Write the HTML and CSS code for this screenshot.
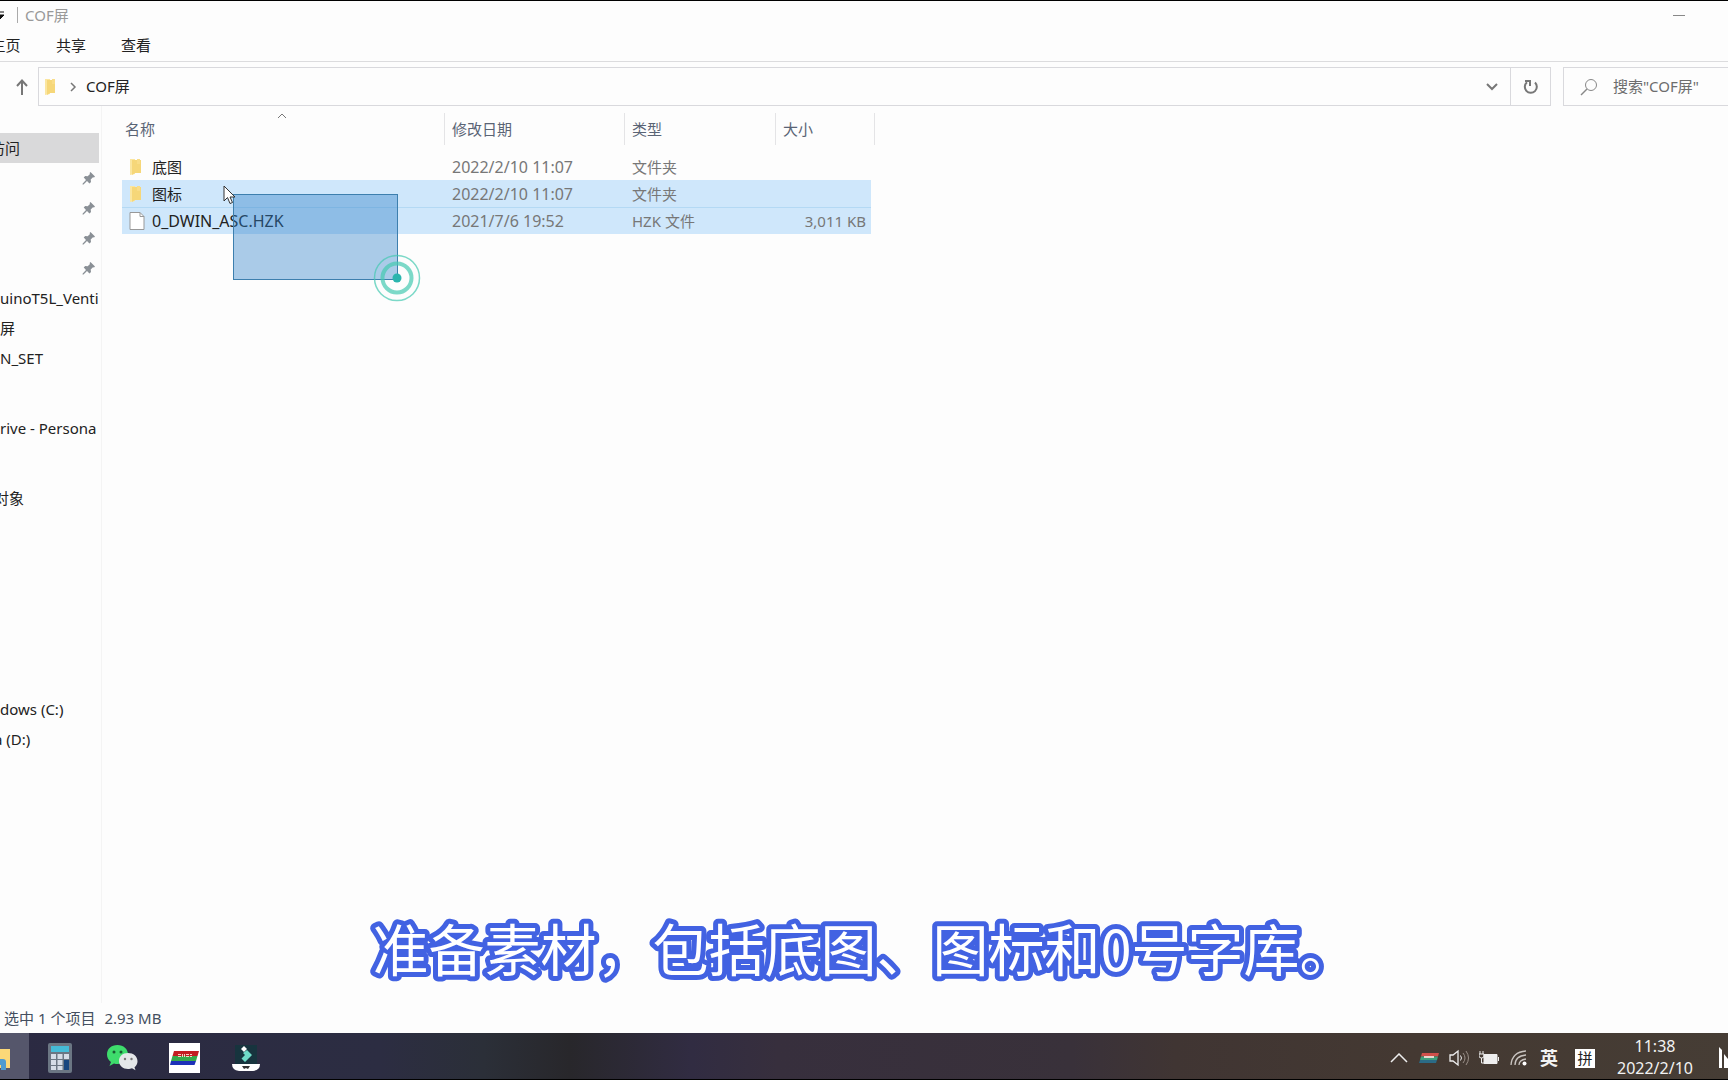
FILE: index.html
```
<!DOCTYPE html>
<html lang="zh-CN">
<head>
  <meta charset="UTF-8" />
  <meta name="viewport" content="width=device-width, initial-scale=1.0"/>
  <title>COF屏</title>
  <link rel="stylesheet" href="styles.css">
</head>
<body>
  <header class="titlebar">
    <svg class="quick" width="5" height="8" viewBox="0 0 5 8"><path d="M0 1h4M0 4h4L0 8z" fill="#111" stroke="#111"/></svg>
    <span class="window-title">COF屏</span>
    <button class="minimize" aria-label="最小化"></button>
  </header>

  <nav class="tabs">
    <button class="cut">主页</button>
    <button>共享</button>
    <button>查看</button>
  </nav>

  <div class="toolbar">
    <button class="up" aria-label="向上">
      <svg width="14" height="18" viewBox="0 0 14 18"><path d="M7 17V3M2 8l5-5.500 5 5.500" fill="none" stroke="#777" stroke-width="2"/></svg>
    </button>
    <div class="address">
      <svg width="12" height="18" viewBox="0 0 12 18"><path d="M1 1h5v15l-5 1z" fill="#fbe6a0"/><path d="M3 2h8v13H6l-3 2z" fill="#f6d779"/><path d="M8 1h3v5H8z" fill="#f9dd88"/></svg>
      <svg class="crumb" width="7" height="10" viewBox="0 0 7 10"><path d="M1 1l4 4-4 4" fill="none" stroke="#777" stroke-width="1.500"/></svg>
      <a href="#">COF屏</a>
      <button class="history" aria-label="历史记录">
        <svg width="12" height="8" viewBox="0 0 12 8"><path d="M1 1l5 5 5-5" fill="none" stroke="#777" stroke-width="2"/></svg>
      </button>
      <button class="refresh" aria-label="刷新">
        <svg width="16" height="16" viewBox="0 0 16 16"><path d="M12 3.500a6 6 0 1 1-8-.3" fill="none" stroke="#777" stroke-width="2"/><path d="M2 2h5v5" fill="none" stroke="#777" stroke-width="2"/></svg>
      </button>
    </div>
    <label class="search">
      <svg width="18" height="18" viewBox="0 0 18 18"><circle cx="11" cy="7" r="5.500" fill="none" stroke="#888"/><path d="M7 11l-6 6" stroke="#888" stroke-width="1.500"/></svg>
      <input type="text" placeholder='搜索"COF屏"' aria-label="搜索">
    </label>
  </div>

  <main class="content">
    <aside class="sidebar">
      <ul>
        <li class="current cut">访问</li>
        <li class="pinned"><svg width="14" height="14" viewBox="0 0 14 14"><use href="#pin"/></svg></li>
        <li class="pinned"><svg width="14" height="14" viewBox="0 0 14 14"><use href="#pin"/></svg></li>
        <li class="pinned"><svg width="14" height="14" viewBox="0 0 14 14"><use href="#pin"/></svg></li>
        <li class="pinned"><svg width="14" height="14" viewBox="0 0 14 14"><use href="#pin"/></svg></li>
        <li>uinoT5L_Venti</li>
        <li>屏</li>
        <li>N_SET</li>
      </ul>
      <ul>
        <li>rive - Persona</li>
      </ul>
      <ul>
        <li class="nested">对象</li>
        <li class="drive">dows (C:)</li>
        <li class="nested">a (D:)</li>
      </ul>
    </aside>

    <section class="files">
      <table>
        <colgroup>
          <col class="col-name"><col class="col-date"><col class="col-type"><col class="col-size"><col class="col-edge">
        </colgroup>
        <thead>
          <tr>
            <th class="sorted">名称
              <svg width="10" height="6" viewBox="0 0 10 6"><path d="M1 5l4-4 4 4" fill="none" stroke="#777"/></svg>
            </th>
            <th>修改日期</th>
            <th>类型</th>
            <th colspan="2">大小</th>
          </tr>
        </thead>
        <tbody>
          <tr>
            <td class="name"><svg width="16" height="18" viewBox="0 0 16 18"><use href="#folder"/></svg>底图</td>
            <td class="date">2022/2/10 11:07</td>
            <td>文件夹</td>
            <td></td>
          </tr>
          <tr class="selected">
            <td class="name"><svg width="16" height="18" viewBox="0 0 16 18"><use href="#folder"/></svg>图标</td>
            <td class="date">2022/2/10 11:07</td>
            <td>文件夹</td>
            <td></td>
          </tr>
          <tr class="selected">
            <td class="name latin"><svg width="16" height="18" viewBox="0 0 16 18"><path d="M1 .5h10l4 4v13H1z" fill="#fff" stroke="#999"/><path d="M11 .5v4h4" fill="none" stroke="#999"/></svg>0_DWIN_ASC.HZK</td>
            <td class="date">2021/7/6 19:52</td>
            <td>HZK 文件</td>
            <td class="size">3,011 KB</td>
          </tr>
        </tbody>
      </table>
    </section>
  </main>

  <footer class="status">
    <span>选中 1 个项目</span>
    <span>2.93 MB</span>
  </footer>

  <div class="taskbar">
    <div class="apps">
      <button class="active" aria-label="文件资源管理器">
        <svg width="32" height="32" viewBox="0 0 32 32"><path d="M2 6h10l3 3h-13z" fill="#e8b33f"/><path d="M2 7h26v19H2z" fill="#fbd878"/><path d="M5 28V20q0-3 3-3h13q3 0 3 3v8h-5v-5h-9v5z" fill="#4e9bd0"/></svg>
      </button>
      <button aria-label="计算器">
        <svg width="24" height="30" viewBox="0 0 24 30"><rect width="24" height="30" rx="2" fill="#6b7683"/><path d="M3 3h18v6H3z" fill="#46bcd8"/><path d="M3 11h5v5H3zM9.500 11h5v5h-5zM16 11h5v5h-5zM3 17h5v5H3zM9.500 17h5v5h-5zM3 23h5v4H3zM9.500 23h5v4h-5z" fill="#d5dce6"/><path d="M16 17h5v10h-5z" fill="#19477f"/></svg>
      </button>
      <button aria-label="微信">
        <svg width="32" height="28" viewBox="0 0 32 28"><path d="M11.500 1C5 1 1 5 1 10.500c0 3 1.500 5.500 4 7.500l-1.500 4 4.500-2.500c7 2 14-2 14-9C22 5 17.500 1 11.500 1z" fill="#3edc6c"/><circle cx="8" cy="8" r="1.500" fill="#195b32"/><circle cx="15" cy="8" r="1.500" fill="#195b32"/><path d="M22 9c-5.500 0-9 3.500-9 8s4 8 9 8c1.500 0 3-.3 4-.8l3.500 2-1-3c2-1.500 3-3.700 3-6C31.500 12.500 27.500 9 22 9z" fill="#e4e6e8"/><circle cx="19" cy="15" r="1.200" fill="#777"/><circle cx="25.500" cy="15" r="1.200" fill="#777"/></svg>
      </button>
      <button aria-label="DGUS">
        <svg width="31" height="30" viewBox="0 0 31 30"><path d="M0 0h31v30H0z" fill="#fff"/><path d="M5 8h25l-1.500 5H3.500z" fill="#c41c22"/><path d="M3.500 13h25L27 18H2z" fill="#36a94a"/><path d="M2 18h25l-1.500 4H1z" fill="#1d30b8"/><path d="M9 11h3v1h-3zM9 13h3v1h-3zM13 11h1v3h-1zM15 11h1v3h-1zM17 11h3v1h-3zM17 13h3v1h-3zM21 11h2v1h-2zM21 13h2v1h-2z" fill="#f2d3c3"/></svg>
      </button>
      <button aria-label="Filmora">
        <svg width="28" height="28" viewBox="0 0 28 28"><path d="M3 1h22v19H3z" fill="#17343e"/><path d="M12 2l3 3-3 3-3-3z" fill="#fff"/><path d="M15 6l5 5-7 7-3.500-3.500 3.500-3.500-2-2z" fill="#6fdcc8"/><path d="M0 20h28q0 6-7 7H7q-7-1-7-7z" fill="#fff"/><path d="M10 22h8l-2 3-2-1-2 1z" fill="#333"/></svg>
      </button>
    </div>

    <div class="tray">
      <button aria-label="显示隐藏的图标"><svg width="18" height="10" viewBox="0 0 18 10"><path d="M1 9l8-8 8 8" fill="none" stroke="#eee" stroke-width="1.500"/></svg></button>
      <button aria-label="DGUS"><svg width="20" height="10" viewBox="0 0 20 10"><path d="M3 0h17l-1 3.500H2z" fill="#d0504a"/><path d="M2 3.500h17l-1 3.500H1z" fill="#3f9f7c"/><path d="M1 7h17l-1 3H0z" fill="#2b6b86"/><path d="M5 3h10v2H5z" fill="#e7d5cc"/></svg></button>
      <button aria-label="音量"><svg width="20" height="18" viewBox="0 0 20 18"><path d="M1 6h3l5-4v14l-5-4H1z" fill="none" stroke="#eee" stroke-width="1.300"/><path d="M11.500 6.500q2 2.500 0 5" fill="none" stroke="#eee"/><path d="M14 4q4 5 0 10M17 2q5 7 0 14" fill="none" stroke="#998f88"/></svg></button>
      <button aria-label="电池"><svg width="20" height="16" viewBox="0 0 20 16"><path d="M5 4.500h13v9H5z" fill="#eee" stroke="#eee"/><path d="M19 7h1v4h-1z" fill="#eee"/><path d="M1 1v3M4 1v3M0 4h5v2q0 2-2.500 2T0 6zM2.500 8v5H5" fill="none" stroke="#eee"/></svg></button>
      <button aria-label="网络"><svg width="18" height="18" viewBox="0 0 18 18"><g fill="none" stroke="#c9c4c0" stroke-width="1.300"><path d="M1 16Q2 3 16 2"/><path d="M5 16Q5 7 16 6"/><path d="M9 16q0-5 7-6"/></g><circle cx="14.500" cy="14.500" r="2" fill="#fff"/></svg></button>
      <button class="lang">英</button>
      <button class="ime"><span>拼</span></button>
      <button class="clock">11:38<br>2022/2/10</button>
      <button class="notify" aria-label="通知"><svg width="9" height="22" viewBox="0 0 9 22"><path d="M0 0l3 3v18H0z" fill="#fff"/><path d="M5 7l4 5v9H5z" fill="#fff"/></svg></button>
    </div>
  </div>

  <!-- drag selection, pointer and click marker -->
  <div class="marquee"></div>
  <svg class="pointer" width="14" height="20" viewBox="0 0 14 20"><path d="M1 1v15l3.500-3.500L7 18.500l2.500-1-2.500-5.500h5z" fill="#fff" stroke="#333"/></svg>
  <svg class="click" width="48" height="48" viewBox="0 0 48 48"><g fill="none" stroke="#45c9b0"><circle cx="24" cy="24" r="22.500" stroke-width="1.500" opacity=".7"/><circle cx="24" cy="24" r="14.500" stroke-width="4" opacity=".7"/></g><circle cx="24" cy="24" r="4.500" fill="#2bb5ae"/></svg>

  <svg class="subtitle">
    <text x="50%" y="56" text-anchor="middle">准备素材，包括底图、图标和0号字库。</text>
  </svg>

  <svg class="symbols" width="0" height="0">
    <symbol id="pin" viewBox="0 0 14 14"><path d="M8.500 1l4.500 4.500-1 1-1-.3-2.300 2.300.3 2.500-1.500 1.500L5 10 1.500 13.500l-1 .0.200-1L4 9 1.700 6.500 3.200 5l2.500.3L8 3l-.4-1z" fill="#8a9096"/></symbol>
    <symbol id="folder" viewBox="0 0 16 18"><path d="M1 1h5v15l-5 1z" fill="#fbe6a0"/><path d="M3 2h9v13H6l-3 2z" fill="#f6d779"/><path d="M8 1h3v5H8z" fill="#f9dd88"/></symbol>
  </svg>
</body>
</html>
```
FILE: styles.css
```
* {
  box-sizing: border-box;
}
body {
  margin: 0;
  height: 100vh;
  display: flex;
  flex-direction: column;
  position: relative;
  overflow: hidden;
  background: #fdfdfd;
  border-top: 1px solid #000;
  border-bottom: 1px solid #000;
  font-family: "Noto Sans", "Noto Sans CJK SC", sans-serif;
  font-size: 15px;
  line-height: 20px;
  color: #222;
}
button {
  background: none;
  border: none;
  padding: 0;
  font: inherit;
  color: inherit;
}
svg {
  flex: none;
  display: block;
}
.cut {
  text-indent: -10px;
}

/* title bar and ribbon tabs */
.titlebar {
  height: 28px;
  display: flex;
  align-items: center;
  gap: 12px;
}
.window-title {
  border-left: 1px solid #aaa;
  padding-left: 7px;
  line-height: 16px;
  color: #999;
}
.minimize {
  width: 12px;
  height: 1px;
  background: #888;
  margin-left: auto;
  margin-right: 43px;
}
.tabs {
  height: 33px;
  display: flex;
  gap: 35px;
  padding-bottom: 1px;
  border-bottom: 1px solid #dcdcde;
}
.tabs .cut {
  width: 21px;
}

/* address row */
.toolbar {
  display: flex;
  padding: 5px 0 0 15px;
}
.up {
  width: 23px;
}
.address {
  flex: 1;
  height: 39px;
  display: flex;
  align-items: center;
  border: 1px solid #d9d9dd;
  padding-left: 5px;
}
.address a {
  padding-bottom: 2px;
  color: #222;
  text-decoration: none;
}
.crumb {
  margin: 0 9px 0 14px;
}
.history {
  margin-left: auto;
  width: 36px;
  display: flex;
  justify-content: center;
}
.refresh {
  width: 40px;
  height: 37px;
  display: flex;
  align-items: center;
  justify-content: center;
  border-left: 1px solid #d9d9dd;
}
.search {
  width: 165px;
  margin-left: 12px;
  display: flex;
  align-items: center;
  gap: 15px;
  padding-left: 16px;
  border: 1px solid #d9d9dd;
  border-right: none;
}
.search input {
  width: 100%;
  min-width: 0;
  border: none;
  padding: 0 0 2px;
  background: none;
  font: inherit;
}
.search input::placeholder {
  color: #6d6d6d;
}

/* navigation pane */
.content {
  flex: 1;
  display: flex;
}
.sidebar {
  width: 102px;
  padding: 27px 2px 0 0;
  border-right: 1px solid #f4f4f4;
}
.sidebar ul {
  list-style: none;
  margin: 0 0 40px;
  padding: 0;
}
.sidebar li {
  height: 30px;
  line-height: 30px;
  white-space: nowrap;
  overflow: hidden;
}
.sidebar .current {
  background: #d9d9da;
}
.sidebar .pinned {
  display: flex;
  align-items: center;
  justify-content: flex-end;
  padding-right: 3px;
}
.sidebar .nested {
  text-indent: -6px;
}
.sidebar .drive {
  margin-top: 181px;
}

/* file list */
.files {
  flex: 1;
  padding: 7px 0 0 20px;
}
table {
  table-layout: fixed;
  width: 753px;
  border-collapse: separate;
  border-spacing: 0;
}
.col-name { width: 323px; }
.col-date { width: 180px; }
.col-type { width: 151px; }
.col-size { width: 95px; }
.col-edge { width: 4px; }
th {
  height: 32px;
  padding: 0 0 0 7px;
  border-right: 1px solid #e4e4e6;
  font-weight: normal;
  text-align: left;
  color: #5a6475;
}
.sorted {
  position: relative;
  padding-left: 3px;
}
.sorted svg {
  position: absolute;
  top: 0;
  left: 48%;
}
tbody::before {
  content: "";
  display: block;
  height: 8px;
}
td {
  height: 27px;
  padding: 0 0 0 7px;
  color: #777;
}
.name {
  display: flex;
  align-items: center;
  gap: 7px;
  color: #222;
}
.date,
.latin {
  font-size: 16px;
}
.size {
  padding: 0 5px 0 0;
  text-align: right;
  white-space: nowrap;
}
.selected td {
  background: #cfe7fb;
}
.selected + .selected td {
  border-top: 1px solid #b4d9f4;
}

/* status bar */
.status {
  height: 30px;
  display: flex;
  align-items: center;
  gap: 9px;
  padding-left: 4px;
  color: #444f60;
}

/* taskbar */
.taskbar {
  height: 46px;
  display: flex;
  justify-content: space-between;
  overflow: hidden;
  background: linear-gradient(90deg, #2b2a42 0%, #2c2d42 22%, #2b2f38 28%, #28272b 33%, #312c42 40%, #372f3d 45%, #39313a 62%, #403533 68%, #443932 82%, #463d35 100%);
  color: #f2f2f2;
}
.apps,
.tray {
  display: flex;
}
.apps {
  margin-left: -33px;
}
.apps button {
  width: 62px;
  padding-top: 4px;
  display: flex;
  align-items: center;
  justify-content: center;
}
.apps .active {
  background: #55566b;
}
.tray button {
  width: 30px;
  padding-top: 4px;
  display: flex;
  align-items: center;
  justify-content: center;
}
.tray .lang {
  font-size: 18px;
  font-weight: bold;
}
.tray .ime {
  width: 42px;
}
.ime span {
  background: #fff;
  color: #222;
  line-height: 19px;
  padding: 0 2px;
}
.tray .clock {
  display: block;
  width: 98px;
  padding-top: 2px;
  font-size: 16px;
  line-height: 22px;
  text-align: center;
}
.tray .notify {
  width: 24px;
  justify-content: flex-end;
}

/* overlays on top of the window */
.marquee {
  position: absolute;
  left: 233px;
  top: 193px;
  width: 165px;
  height: 86px;
  background: rgba(45, 128, 200, 0.4);
  border: 1px solid #3d7fae;
}
.pointer {
  position: absolute;
  left: 223px;
  top: 184px;
}
.click {
  position: absolute;
  left: 373px;
  top: 253px;
}
.subtitle {
  position: absolute;
  left: 0;
  bottom: 88px;
  width: 100%;
  height: 76px;
}
.subtitle text {
  font-family: "Noto Sans CJK SC", sans-serif;
  font-size: 56px;
  fill: #fff;
  stroke: #4262e2;
  stroke-width: 10px;
  stroke-linejoin: round;
  paint-order: stroke;
}
.symbols {
  position: absolute;
}
```
